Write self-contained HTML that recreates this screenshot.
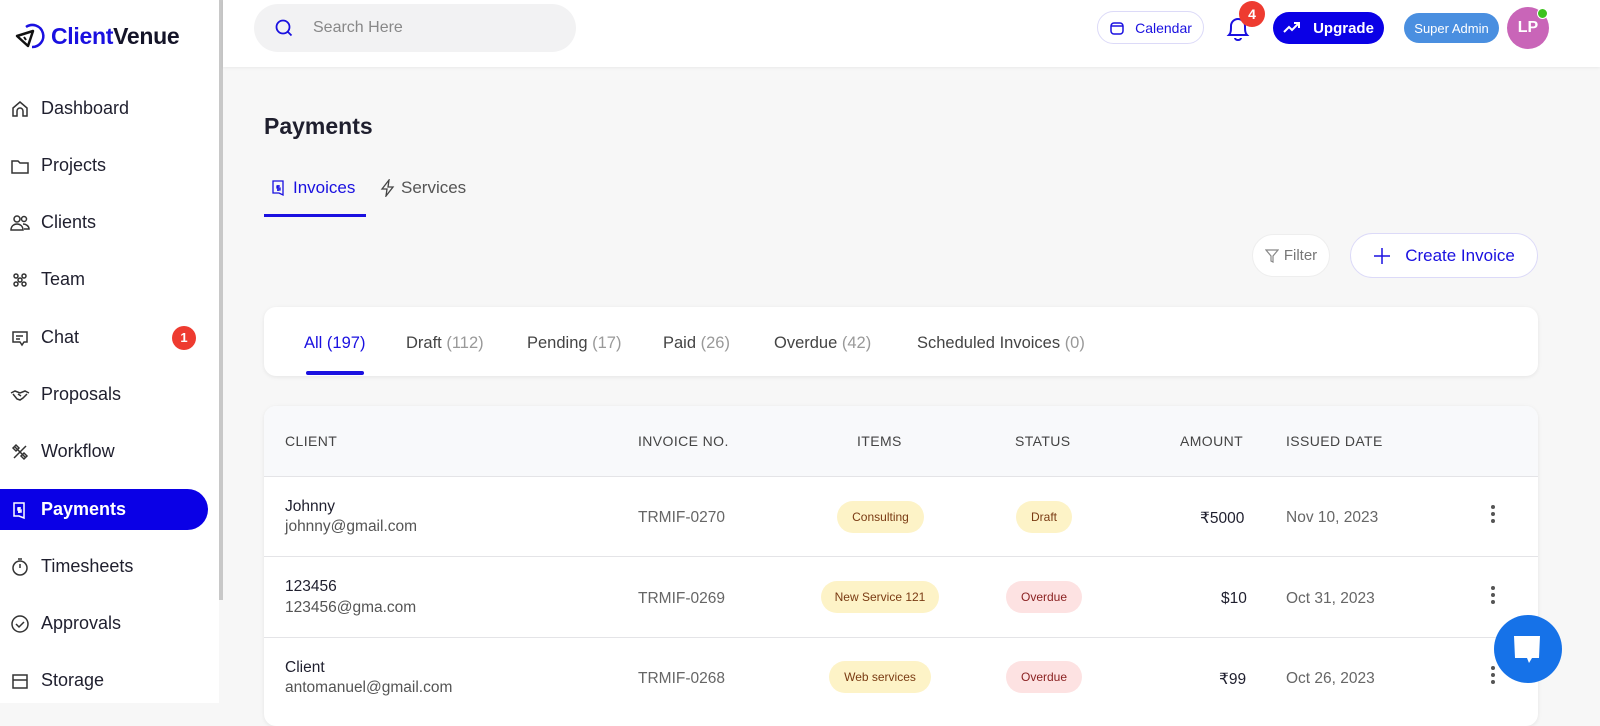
<!DOCTYPE html>
<html><head><meta charset="utf-8"><style>
*{box-sizing:border-box;margin:0;padding:0}
body{width:1600px;height:703px;overflow:hidden;background:#f7f7f7;font-family:"Liberation Sans",sans-serif;position:relative;color:#1f1f2e}
.side{position:absolute;left:0;top:0;width:219px;height:703px;background:#fff}
.sb{position:absolute;left:219px;top:0;width:4px;height:600px;background:#c8c8c8}
.logo{position:absolute;left:14px;top:19px;display:flex;align-items:center;font-size:23px;font-weight:bold;letter-spacing:-0.3px}
.nav{position:absolute;left:0;width:208px;height:41px;display:flex;align-items:center;padding-left:10px;font-size:18px;color:#1f1f2e}
.nav svg{width:20px;height:20px;margin-right:11px;fill:none;stroke:#333;stroke-width:1.5}
.nav.act{background:#0a00e6;color:#fff;font-weight:bold;border-radius:0 21px 21px 0}
.nav.act svg{stroke:#fff}
.top{position:absolute;left:223px;top:0;right:0;height:67px;background:#fff;box-shadow:0 1px 3px rgba(0,0,0,.06)}
.search{position:absolute;left:254px;top:4px;width:322px;height:48px;border-radius:24px;background:#f2f2f3;display:flex;align-items:center;padding-left:20px;font-size:16px;color:#888}
.pill{position:absolute;border-radius:17px;display:flex;align-items:center;justify-content:center;font-size:14px}
h1{position:absolute;left:264px;top:113px;font-size:23px;font-weight:bold;color:#1f1f2e}
.tab{position:absolute;top:178px;font-size:17px;display:flex;align-items:center}
.card{position:absolute;left:264px;width:1274px;background:#fff;border-radius:12px;box-shadow:0 1px 4px rgba(0,0,0,.08)}
.ft{position:absolute;top:334px;font-size:16.5px;color:#444}
.ft span{color:#999}
.th{position:absolute;top:433px;font-size:14px;color:#444;letter-spacing:.4px}
.row{position:absolute;left:264px;width:1274px;height:80px;border-top:1px solid #e4e4e7}
.c{position:absolute;font-size:15.5px}
.badge{position:absolute;height:32px;border-radius:16px;font-size:12px;display:flex;align-items:center;justify-content:center;color:#7a3b13}
.y{background:#fdf3c7}.r{background:#fde2e2;color:#8b2222}
.dots{position:absolute;left:1491px;width:4px}
.dots i{display:block;width:4px;height:4px;border-radius:2px;background:#555;margin-bottom:3px}
</style></head><body>
<div class="side"></div><div class="sb"></div>
<div class="logo"><svg width="34" height="34" viewBox="0 0 34 34"><path d="M12 8 A11 11 0 1 1 18 28" fill="none" stroke="#1a10e0" stroke-width="2.5"/><path d="M3 17 L19 12 L14 27 Z" fill="none" stroke="#111" stroke-width="2.5" stroke-linejoin="round"/><path d="M10 18 l2 3" stroke="#111" stroke-width="2"/></svg><span style="color:#1a10e0;margin-left:3px">Client</span><span style="color:#141428">Venue</span></div>
<div class="nav" style="top:88px"><svg viewBox="0 0 20 20"><path d="M3 17V9l7-6 7 6v8h-4v-5a3 3 0 0 0-6 0v5z"/></svg>Dashboard</div>
<div class="nav" style="top:145px"><svg viewBox="0 0 20 20"><path d="M2 5h6l2 2h8v10H2z"/></svg>Projects</div>
<div class="nav" style="top:202px"><svg viewBox="0 0 20 20"><circle cx="7" cy="6" r="3"/><circle cx="14" cy="6" r="2.5"/><path d="M1 17c0-4 3-6 6-6s6 2 6 6zM13 11c3 0 6 2 6 5h-5"/></svg>Clients</div>
<div class="nav" style="top:259px"><svg viewBox="0 0 20 20"><circle cx="6" cy="6" r="2"/><circle cx="14" cy="6" r="2"/><circle cx="10" cy="10" r="2"/><circle cx="6" cy="14" r="2"/><circle cx="14" cy="14" r="2"/></svg>Team</div>
<div class="nav" style="top:317px"><svg viewBox="0 0 20 20"><path d="M3 4h14v10h-3l-2 3-2-3H3z M6 8h7 M6 11h4"/></svg>Chat<span style="position:absolute;left:172px;width:24px;height:24px;border-radius:12px;background:#ee3b30;color:#fff;font-size:13px;font-weight:bold;display:flex;align-items:center;justify-content:center">1</span></div>
<div class="nav" style="top:374px"><svg viewBox="0 0 20 20"><path d="M1 8l4-2 5 2 5-2 4 2M3 9l4 5 3 1 3-2 4-4M8 9l3 2"/></svg>Proposals</div>
<div class="nav" style="top:431px"><svg viewBox="0 0 20 20"><path d="M4 4l12 12M16 4L4 16M3 6l3-3 3 3-3 3zM11 14l3-3 3 3-3 3z"/></svg>Workflow</div>
<div class="nav act" style="top:489px"><svg viewBox="0 0 20 20"><path d="M4 3h10v15l-5-2H4z M9 7v6 M11 8H8v2h3v2H8"/></svg>Payments</div>
<div class="nav" style="top:546px"><svg viewBox="0 0 20 20"><circle cx="10" cy="11" r="7"/><path d="M8 2h4M10 7v4"/></svg>Timesheets</div>
<div class="nav" style="top:603px"><svg viewBox="0 0 20 20"><circle cx="10" cy="10" r="8"/><path d="M6 10l3 3 5-5"/></svg>Approvals</div>
<div class="nav" style="top:660px"><svg viewBox="0 0 20 20"><path d="M3 4h14v13H3zM3 9h14"/></svg>Storage</div>

<div class="top"></div>
<div class="search"><svg width="20" height="20" viewBox="0 0 20 20" fill="none" stroke="#1a10e0" stroke-width="1.8"><circle cx="9" cy="9" r="6.5"/><path d="M14 14l3.5 3.5"/></svg><span style="margin-left:19px">Search Here</span></div>
<div class="pill" style="left:1097px;top:11px;width:107px;height:33px;border:1px solid #dcdaf8;color:#1a10e0"><svg width="16" height="16" viewBox="0 0 16 16" fill="none" stroke="#1a10e0" stroke-width="1.5" style="margin-right:10px"><rect x="2" y="3" width="12" height="11" rx="3"/><path d="M2 6h12"/></svg>Calendar</div>
<svg style="position:absolute;left:1224px;top:13px" width="28" height="30" viewBox="0 0 28 30" fill="none" stroke="#1a10e0" stroke-width="2"><path d="M5 22c2-2 2-5 2-9a7 7 0 0 1 14 0c0 4 0 7 2 9z M11 25a3 2 0 0 0 6 0"/></svg>
<div style="position:absolute;left:1239px;top:1px;width:26px;height:26px;border-radius:13px;background:#ee3b30;color:#fff;font-size:14px;font-weight:bold;display:flex;align-items:center;justify-content:center">4</div>
<div class="pill" style="left:1273px;top:12px;width:111px;height:32px;background:#0a00e6;color:#fff;font-weight:bold;font-size:15px"><svg width="18" height="12" viewBox="0 0 18 12" fill="none" stroke="#fff" stroke-width="2" style="margin-right:12px"><path d="M1 10l5-5 3 3 7-7M11 1h5v5"/></svg>Upgrade</div>
<div class="pill" style="left:1404px;top:13px;width:95px;height:30px;background:#4a8fe0;color:#fff;font-size:13px">Super Admin</div>
<div style="position:absolute;left:1507px;top:7px;width:42px;height:42px;border-radius:21px;background:#c965b8;color:#fff;font-weight:bold;font-size:16px;display:flex;align-items:center;justify-content:center">LP</div>
<div style="position:absolute;left:1537px;top:8px;width:11px;height:11px;border-radius:6px;background:#3cc21d;border:1.5px solid #fff"></div>

<h1>Payments</h1>
<div class="tab" style="left:270px;color:#1a10e0"><svg width="18" height="18" viewBox="0 0 18 18" fill="none" stroke="#1a10e0" stroke-width="1.3" style="margin-right:5px"><path d="M3 2h10v14l-4-2H3z M8 6v6 M10 7H7v2h3v2H7"/></svg>Invoices</div>
<div style="position:absolute;left:264px;top:214px;width:102px;height:3px;background:#1a10e0"></div>
<div class="tab" style="left:380px;color:#555"><svg width="16" height="18" viewBox="0 0 16 18" fill="none" stroke="#444" stroke-width="1.3" style="margin-right:5px"><path d="M9 1L2 10h5l-1 7 7-9H8z"/></svg>Services</div>

<div class="pill" style="left:1252px;top:234px;width:78px;height:43px;border-radius:22px;background:#fff;border:1px solid #eee;color:#777;font-size:15px"><svg width="14" height="14" viewBox="0 0 14 14" fill="none" stroke="#888" stroke-width="1.2" style="margin-right:5px"><path d="M1 1h12L8 7v6l-2-1V7z"/></svg>Filter</div>
<div class="pill" style="left:1350px;top:233px;width:188px;height:45px;border-radius:23px;background:#fff;border:1px solid #dcdaf8;color:#1a10e0;font-size:17px"><svg width="18" height="18" viewBox="0 0 18 18" stroke="#1a10e0" stroke-width="1.5" style="margin-right:14px"><path d="M9 1v16M1 9h16"/></svg>Create Invoice</div>

<div class="card" style="top:307px;height:69px"></div>
<div class="ft" style="left:304px;color:#1a10e0">All (197)</div>
<div style="position:absolute;left:306px;top:371px;width:58px;height:4px;border-radius:2px;background:#1a10e0"></div>
<div class="ft" style="left:406px">Draft <span>(112)</span></div>
<div class="ft" style="left:527px">Pending <span>(17)</span></div>
<div class="ft" style="left:663px">Paid <span>(26)</span></div>
<div class="ft" style="left:774px">Overdue <span>(42)</span></div>
<div class="ft" style="left:917px">Scheduled Invoices <span>(0)</span></div>

<div class="card" style="top:406px;height:320px;overflow:hidden"><div style="height:70px;background:#f8f9fb"></div></div>
<div class="th" style="left:285px">CLIENT</div>
<div class="th" style="left:638px">INVOICE NO.</div>
<div class="th" style="left:857px">ITEMS</div>
<div class="th" style="left:1015px">STATUS</div>
<div class="th" style="left:1180px">AMOUNT</div>
<div class="th" style="left:1286px">ISSUED DATE</div>

<div class="row" style="top:476px"></div>
<div class="row" style="top:556px"></div>
<div class="row" style="top:637px"></div>

<div class="c" style="left:285px;top:498px">Johnny</div><div class="c" style="left:285px;top:518px;color:#555">johnny@gmail.com</div>
<div class="c" style="left:638px;top:509px;color:#666">TRMIF-0270</div>
<div class="badge y" style="left:837px;top:501px;width:87px">Consulting</div>
<div class="badge y" style="left:1016px;top:501px;width:56px">Draft</div>
<div class="c" style="left:1200px;top:509px">₹5000</div>
<div class="c" style="left:1286px;top:509px;color:#666">Nov 10, 2023</div>
<div class="dots" style="top:505px"><i></i><i></i><i></i></div>

<div class="c" style="left:285px;top:578px">123456</div><div class="c" style="left:285px;top:599px;color:#555">123456@gma.com</div>
<div class="c" style="left:638px;top:590px;color:#666">TRMIF-0269</div>
<div class="badge y" style="left:821px;top:581px;width:118px">New Service 121</div>
<div class="badge r" style="left:1006px;top:581px;width:76px">Overdue</div>
<div class="c" style="left:1221px;top:590px">$10</div>
<div class="c" style="left:1286px;top:590px;color:#666">Oct 31, 2023</div>
<div class="dots" style="top:586px"><i></i><i></i><i></i></div>

<div class="c" style="left:285px;top:659px">Client</div><div class="c" style="left:285px;top:679px;color:#555">antomanuel@gmail.com</div>
<div class="c" style="left:638px;top:670px;color:#666">TRMIF-0268</div>
<div class="badge y" style="left:829px;top:661px;width:102px">Web services</div>
<div class="badge r" style="left:1006px;top:661px;width:76px">Overdue</div>
<div class="c" style="left:1219px;top:670px">₹99</div>
<div class="c" style="left:1286px;top:670px;color:#666">Oct 26, 2023</div>
<div class="dots" style="top:666px"><i></i><i></i><i></i></div>

<div style="position:absolute;left:1494px;top:615px;width:68px;height:68px;border-radius:34px;background:#1672e8"></div>
<svg style="position:absolute;left:1510px;top:631px" width="36" height="36" viewBox="0 0 36 36"><path d="M4 5h26l-1 22H22l-3 5-2-5H5z" fill="#fff"/></svg>
</body></html>
